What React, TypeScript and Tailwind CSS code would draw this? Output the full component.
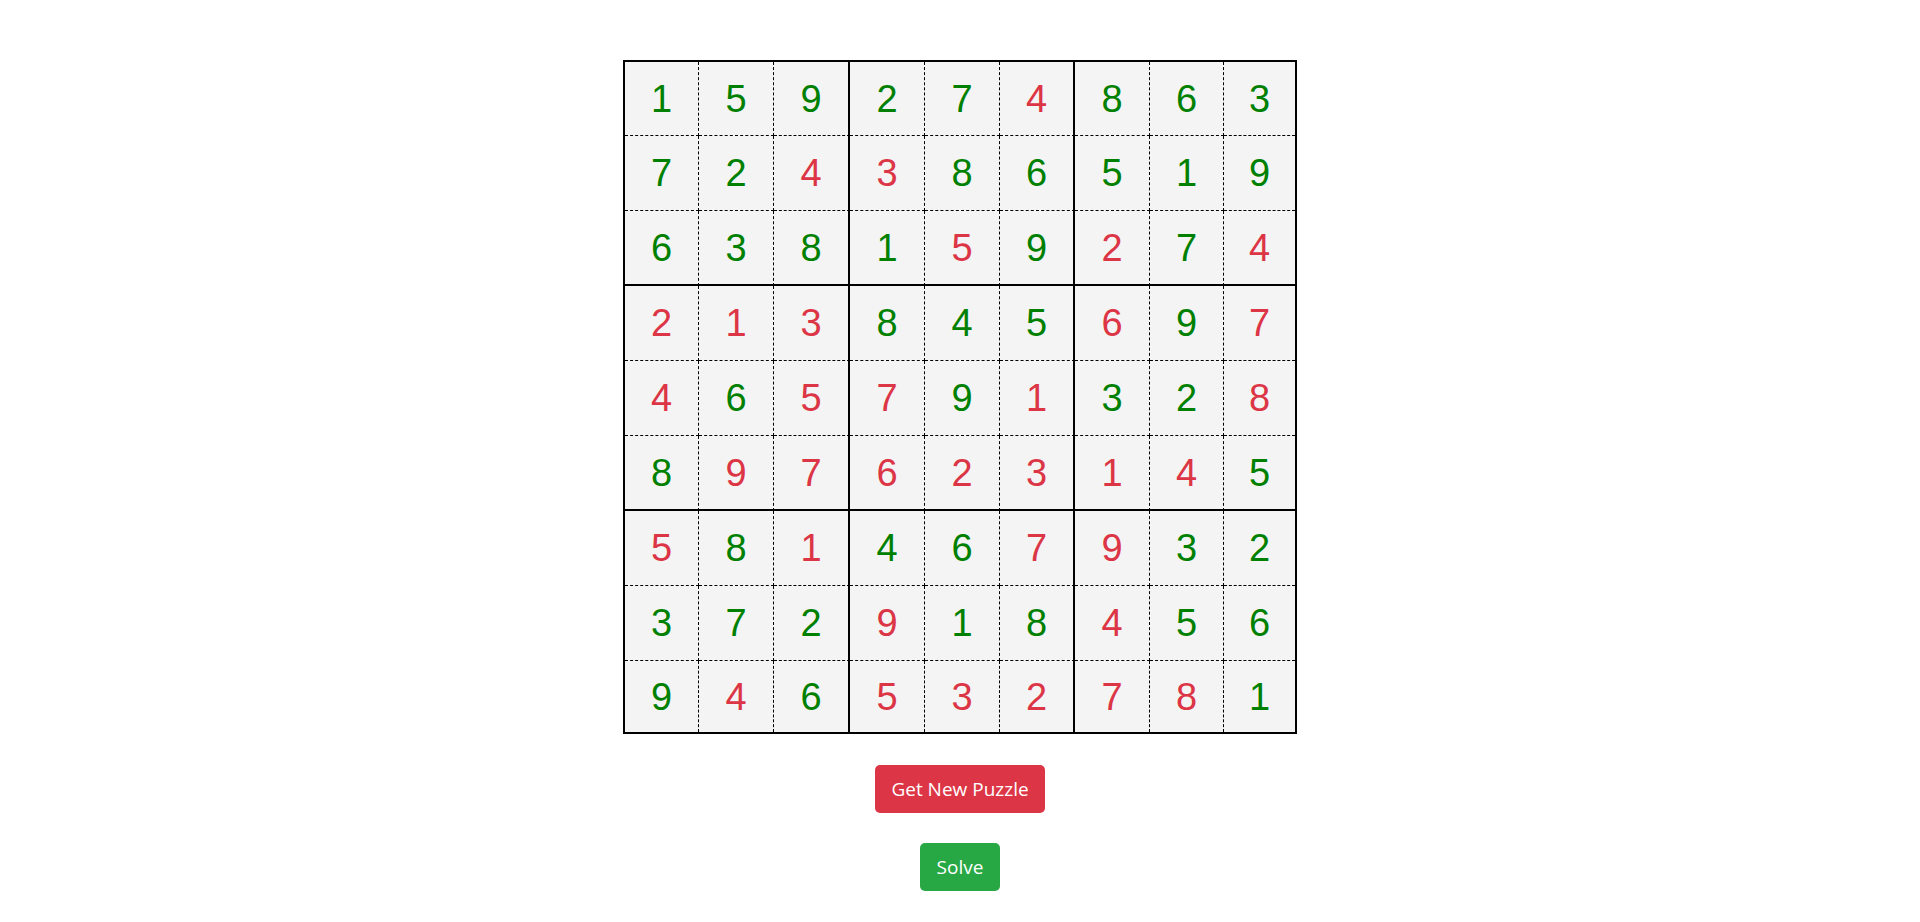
const board = [
  '159274863',
  '724386519',
  '638159274',
  '213845697',
  '465791328',
  '897623145',
  '581467932',
  '372918456',
  '946532781',
]

// g = given (green), r = filled in (red)
const marks = [
  'gggggrggg',
  'ggrrggggg',
  'ggggrgrgr',
  'rrrgggrgr',
  'rgrrgrggr',
  'grrrrrrrg',
  'rgrggrrgg',
  'gggrggrgg',
  'grgrrrrrg',
]

function cellBorders(r: number, c: number) {
  let right = ''
  if (c === 2 || c === 5) right = 'border-r-2 border-r-black'
  else if (c !== 8) right = 'border-r border-r-black [border-right-style:dashed]!'
  let bottom = ''
  if (r === 2 || r === 5) bottom = 'border-b-2 border-b-black'
  else if (r !== 8) bottom = 'border-b border-b-black [border-bottom-style:dashed]!'
  return `${right} ${bottom}`
}

export default function App() {
  return (
    <div className="min-h-screen bg-white flex flex-col items-center pt-[60px]">
      <div className="w-[674px] h-[674px] border-2 border-black bg-[#f4f4f4] grid grid-cols-[74px_75px_76px_75px_75px_75px_75px_74px_71px] grid-rows-[74px_75px_75px_75px_75px_75px_75px_75px_71px]">
        {board.map((row, r) =>
          row.split('').map((d, c) => (
            <div key={`${r}-${c}`} className={`flex items-center justify-center ${cellBorders(r, c)}`}>
              <span
                className={`text-[38px] leading-none font-['Liberation_Sans',Arial,sans-serif] ${
                  marks[r][c] === 'g' ? 'text-[#008000]' : 'text-[#dc3545]'
                }`}
              >
                {d}
              </span>
            </div>
          ))
        )}
      </div>
      <button className="mt-[31px] w-[170px] h-[48px] rounded-[5px] bg-[#dc3545] text-white text-[19px] font-['Open_Sans',sans-serif]">
        Get New Puzzle
      </button>
      <button className="mt-[30px] w-[80px] h-[48px] rounded-[5px] bg-[#28a745] text-white text-[19px] font-['Open_Sans',sans-serif]">
        Solve
      </button>
    </div>
  )
}
